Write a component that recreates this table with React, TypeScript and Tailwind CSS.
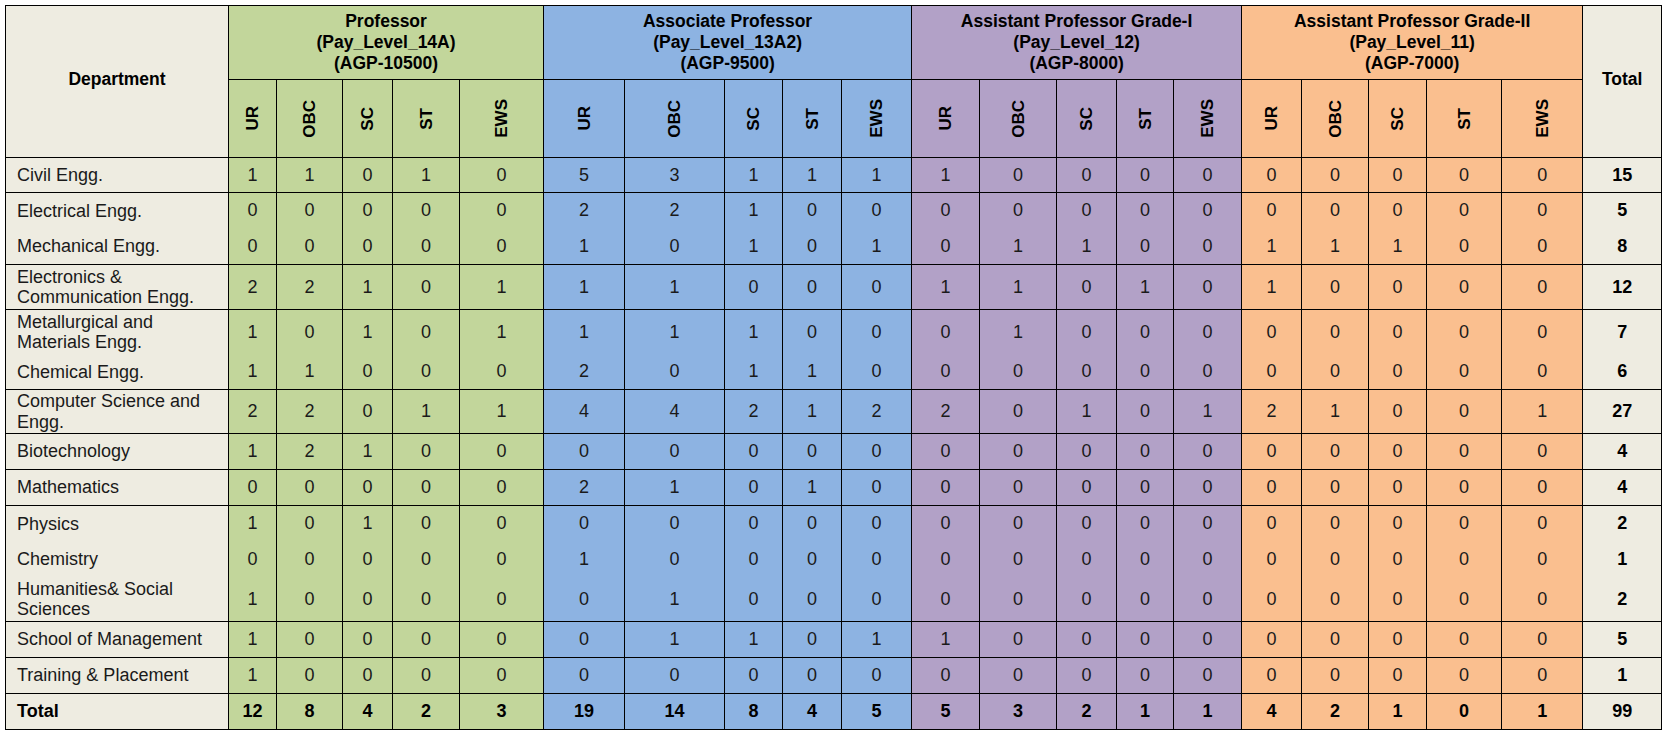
type Row = {
  name: string[];
  values: number[];
  total: number;
  h: string;
  top: boolean;
};

const groups = [
  { title: "Professor", pay: "(Pay_Level_14A)", agp: "(AGP-10500)", bg: "bg-[#c2d69b]" },
  { title: "Associate Professor", pay: "(Pay_Level_13A2)", agp: "(AGP-9500)", bg: "bg-[#8db3e2]" },
  { title: "Assistant Professor Grade-I", pay: "(Pay_Level_12)", agp: "(AGP-8000)", bg: "bg-[#b2a1c7]" },
  { title: "Assistant Professor Grade-II", pay: "(Pay_Level_11)", agp: "(AGP-7000)", bg: "bg-[#fabf8f]" },
];

const cats = ["UR", "OBC", "SC", "ST", "EWS"];

const colWidths = [
  "w-[223px]",
  "w-[48px]", "w-[66px]", "w-[50px]", "w-[67px]", "w-[84px]",
  "w-[81px]", "w-[100px]", "w-[58px]", "w-[59px]", "w-[70px]",
  "w-[68px]", "w-[77px]", "w-[60px]", "w-[57px]", "w-[68px]",
  "w-[60px]", "w-[67px]", "w-[58px]", "w-[75px]", "w-[81px]",
  "w-[79px]",
];

const z = [0, 0, 0, 0, 0];

const rows: Row[] = [
  { name: ["Civil Engg."], values: [1, 1, 0, 1, 0, 5, 3, 1, 1, 1, 1, 0, 0, 0, 0, ...z], total: 15, h: "h-[35px]", top: true },
  { name: ["Electrical Engg."], values: [...z, 2, 2, 1, 0, 0, ...z, ...z], total: 5, h: "h-[36px]", top: true },
  { name: ["Mechanical Engg."], values: [...z, 1, 0, 1, 0, 1, 0, 1, 1, 0, 0, 1, 1, 1, 0, 0], total: 8, h: "h-[36px]", top: false },
  { name: ["Electronics &", "Communication Engg."], values: [2, 2, 1, 0, 1, 1, 1, 0, 0, 0, 1, 1, 0, 1, 0, 1, 0, 0, 0, 0], total: 12, h: "h-[45px]", top: true },
  { name: ["Metallurgical and", "Materials Engg."], values: [1, 0, 1, 0, 1, 1, 1, 1, 0, 0, 0, 1, 0, 0, 0, ...z], total: 7, h: "h-[45px]", top: true },
  { name: ["Chemical Engg."], values: [1, 1, 0, 0, 0, 2, 0, 1, 1, 0, ...z, ...z], total: 6, h: "h-[35px]", top: false },
  { name: ["Computer Science and", "Engg."], values: [2, 2, 0, 1, 1, 4, 4, 2, 1, 2, 2, 0, 1, 0, 1, 2, 1, 0, 0, 1], total: 27, h: "h-[44px]", top: true },
  { name: ["Biotechnology"], values: [1, 2, 1, 0, 0, ...z, ...z, ...z], total: 4, h: "h-[36px]", top: true },
  { name: ["Mathematics"], values: [...z, 2, 1, 0, 1, 0, ...z, ...z], total: 4, h: "h-[36px]", top: true },
  { name: ["Physics"], values: [1, 0, 1, 0, 0, ...z, ...z, ...z], total: 2, h: "h-[36px]", top: true },
  { name: ["Chemistry"], values: [...z, 1, 0, 0, 0, 0, ...z, ...z], total: 1, h: "h-[36px]", top: false },
  { name: ["Humanities& Social", "Sciences"], values: [1, 0, 0, 0, 0, 0, 1, 0, 0, 0, ...z, ...z], total: 2, h: "h-[44px]", top: false },
  { name: ["School of Management"], values: [1, 0, 0, 0, 0, 0, 1, 1, 0, 1, 1, 0, 0, 0, 0, ...z], total: 5, h: "h-[36px]", top: true },
  { name: ["Training & Placement"], values: [1, 0, 0, 0, 0, ...z, ...z, ...z], total: 1, h: "h-[36px]", top: true },
];

const totals = [12, 8, 4, 2, 3, 19, 14, 8, 4, 5, 5, 3, 2, 1, 1, 4, 2, 1, 0, 1];

export default function App() {
  return (
    <div className="min-h-screen bg-white pl-[5px] pt-[5px] font-['Liberation_Sans',Arial,sans-serif] text-[#1a1a1a]">
      <table className="table-fixed border-collapse w-[1656px] border border-black">
        <colgroup>
          {colWidths.map((w, i) => (
            <col key={i} className={w} />
          ))}
        </colgroup>
        <thead>
          <tr className="h-[74px]">
            <th
              rowSpan={2}
              className="border border-black bg-[#eeece1] text-[17.5px] font-bold text-black align-middle pb-[4px]"
            >
              Department
            </th>
            {groups.map((g) => (
              <th
                key={g.title}
                colSpan={5}
                className={`border border-black ${g.bg} text-[17.5px] leading-[21px] font-bold text-black align-middle`}
              >
                <div>{g.title}</div>
                <div>{g.pay}</div>
                <div>{g.agp}</div>
              </th>
            ))}
            <th
              rowSpan={2}
              className="border border-black bg-[#eeece1] text-[17.5px] font-bold text-black align-middle pb-[4px]"
            >
              Total
            </th>
          </tr>
          <tr className="h-[78px]">
            {groups.map((g) =>
              cats.map((c) => (
                <th key={g.title + c} className={`border border-black ${g.bg} p-0 align-middle`}>
                  <div className="flex justify-center">
                    <span className="[writing-mode:vertical-rl] rotate-180 text-[17px] font-bold text-black leading-none">
                      {c}
                    </span>
                  </div>
                </th>
              ))
            )}
          </tr>
        </thead>
        <tbody className="text-[18px]">
          {rows.map((r, ri) => {
            const edge = r.top ? "border-x border-t border-black" : "border-x border-black";
            return (
              <tr key={ri} className={r.h}>
                <td className={`${edge} bg-[#eeece1] pl-[11px] leading-[20.5px] align-middle`}>
                  {r.name.map((n) => (
                    <div key={n} className="whitespace-nowrap">
                      {n}
                    </div>
                  ))}
                </td>
                {r.values.map((v, i) => (
                  <td key={i} className={`${edge} ${groups[Math.floor(i / 5)].bg} text-center align-middle`}>
                    {v}
                  </td>
                ))}
                <td className={`${edge} bg-[#eeece1] text-center font-bold text-black align-middle`}>
                  {r.total}
                </td>
              </tr>
            );
          })}
          <tr className="h-[36px] font-bold text-black">
            <td className="border border-black bg-[#eeece1] pl-[11px] align-middle">Total</td>
            {totals.map((v, i) => (
              <td key={i} className={`border border-black ${groups[Math.floor(i / 5)].bg} text-center align-middle`}>
                {v}
              </td>
            ))}
            <td className="border border-black bg-[#eeece1] text-center align-middle">99</td>
          </tr>
        </tbody>
      </table>
    </div>
  );
}
